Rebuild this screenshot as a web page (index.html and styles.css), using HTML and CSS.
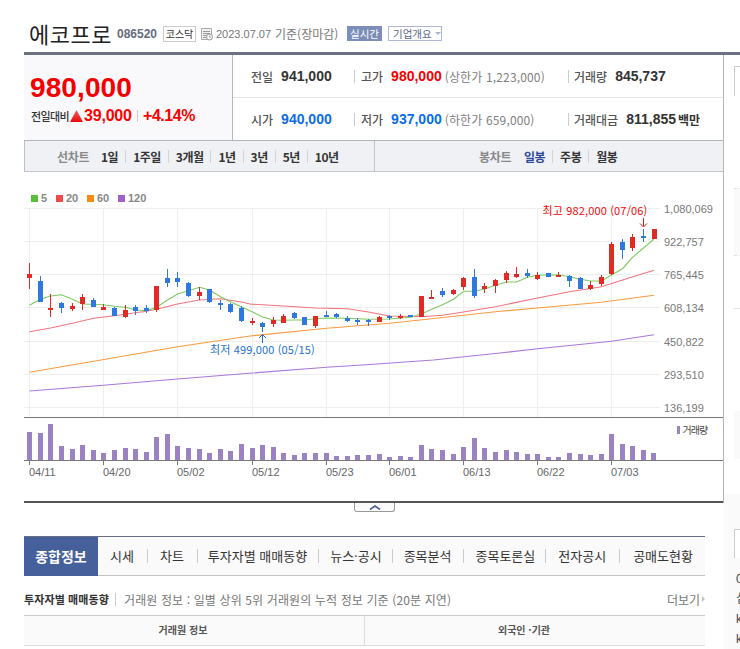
FILE: index.html
```html
<!DOCTYPE html>
<html lang="ko">
<head>
<meta charset="utf-8">
<title>에코프로</title>
<link rel="stylesheet" href="styles.css">
</head>
<body>
<div class="page">
  <header class="head">
    <h1 class="name">에코프로</h1>
    <span class="code">086520</span>
    <span class="market">코스닥</span>
    <svg class="cal" width="12" height="13" viewBox="0 0 12 13"><path class="cal-a" d="M.5.5h10v11H.5z"/><path class="cal-b" d="M2 3.5h7M2 5.5h7M2 7.5h4M2 9.5h3"/><circle class="cal-c" cx="8.5" cy="9" r="3"/><path class="cal-b" d="M8.5 7.5V9h1.5"/></svg>
    <span class="date">2023.07.07</span>
    <span class="basis">기준(장마감)</span>
    <span class="live">실시간</span>
    <span class="about">기업개요<i class="caret"></i></span>
  </header>
  <div class="body">
    <main class="main">
      <section class="summary">
        <div class="price-box">
          <div class="price">980,000</div>
          <div class="change">
            <span class="change-label">전일대비</span>
            <svg class="tri" width="13" height="12" viewBox="0 0 13 12"><defs><linearGradient id="tg" x1="0" y1="0" x2="0" y2="1"><stop offset="0" stop-color="#f46060"/><stop offset="1" stop-color="#e80808"/></linearGradient></defs><path fill="url(#tg)" d="M6.5 0L13 12H0z"/></svg>
            <span class="change-num">39,000</span>
            <span class="change-pct">+4.14%</span>
          </div>
        </div>
        <div class="quotes">
          <div class="row">
            <div class="cell"><span class="lb">전일</span><b class="val">941,000</b></div>
            <div class="cell sep"><span class="lb">고가</span><b class="val up">980,000</b><span class="lim">(상한가 1,223,000)</span></div>
            <div class="cell sep sep3"><span class="lb">거래량</span><b class="val">845,737</b></div>
          </div>
          <div class="row">
            <div class="cell"><span class="lb">시가</span><b class="val dn">940,000</b></div>
            <div class="cell sep"><span class="lb">저가</span><b class="val dn">937,000</b><span class="lim">(하한가 659,000)</span></div>
            <div class="cell sep sep3"><span class="lb">거래대금</span><b class="val">811,855</b><b class="unit">백만</b></div>
          </div>
        </div>
      </section>
      <nav class="periods">
        <div class="pgroup pleft">
          <span class="ptitle">선차트</span>
          <ul class="plist">
            <li>1일</li><li>1주일</li><li>3개월</li><li>1년</li><li>3년</li><li>5년</li><li>10년</li>
          </ul>
        </div>
        <div class="pgroup pright">
          <span class="ptitle">봉차트</span>
          <ul class="plist">
            <li class="on">일봉</li><li>주봉</li><li>월봉</li>
          </ul>
        </div>
      </nav>
      <svg class="chart" width="699" height="329" viewBox="24 172 699 329">
        <path class="grid" d="M24 208.5H660M24 241.5H660M24 274.5H660M24 307.5H660M24 341.5H660M24 374.5H660M24 407.5H660M29.5 208V417M103.5 208V417M177.5 208V417M252.5 208V417M326.5 208V417M389.5 208V417M463.5 208V417M537.5 208V417M611.5 208V417"/>
        <rect class="sw-g" x="31" y="195" width="7" height="7"/><text class="lg" x="41" y="202">5</text>
        <rect class="sw-r" x="56" y="195" width="7" height="7"/><text class="lg" x="66" y="202">20</text>
        <rect class="sw-o" x="87" y="195" width="7" height="7"/><text class="lg" x="97" y="202">60</text>
        <rect class="sw-p" x="118" y="195" width="7" height="7"/><text class="lg" x="128" y="202">120</text>

        <polyline class="ma ma-p" points="29.5,391 103.3,385.3 177.3,379 252.3,373 326.7,367.3 370,364.5 433.3,360 500,353 537.5,348.7 611.5,341.3 654,334.7"/>
        <polyline class="ma ma-o" points="29.5,372.3 101,360 177.5,346.7 250,336 326.7,328.3 389.5,323.3 420,320 500,311.3 537.5,308 601.5,302.3 654,295.3"/>
        <polyline class="ma ma-r" points="29.5,331.7 50.5,328 72.5,323.3 93.5,318.3 114.5,315.7 135.5,312.7 146.5,311.3 156.5,309.3 177.5,304 199.5,300 220.5,298.7 241.5,302 250,304 283.5,306 315.5,308 347.5,308.7 368.5,312 389.5,316 421.5,316.7 442.5,315.3 463.5,312 495.5,306.7 537.5,298 569.5,291.7 601.5,286.7 622.5,280 654,270.3"/>
        <polyline class="ma ma-g" points="29.5,305.3 40.5,299.3 50.5,296 61.5,294.7 72.5,299.3 82.5,304 103.5,304.7 114.5,306.3 125.5,307.3 135.5,310 146.5,310.7 156.5,307.3 167.5,300 177.5,294 188.5,290.7 199.5,287.3 209.5,290 220.5,296.7 230.5,301.7 241.5,307 250,310.7 262.5,317 273.5,320 283.5,320.3 294.5,320 304.5,320 315.5,318.7 326.5,318 347.5,318.3 368.5,319.3 389.5,319 410.5,317.3 421.5,314 431.5,309.3 442.5,304.7 453.5,299.3 463.5,291.3 474.5,291.3 484.5,289 495.5,285.3 506.5,282 516.5,282 527.5,277.3 537.5,275.3 548.5,275 558.5,274.7 569.5,276.7 580.5,279.3 590.5,281 601.5,281 611.5,275 622.5,268.7 632.5,257.3 643.5,248 654,239"/>

        <path class="c-up" d="M29 263h1V289h-1zM27 274h5V278h-5zM50 294h1V317h-1zM48 308h5V310h-5zM72 303h1V311h-1zM70 306h5V309h-5zM82 294h1V310h-1zM80 297h5V304h-5zM103 304h1V310h-1zM101 307h5V310h-5zM125 305h1V318h-1zM123 310h5V317h-5zM156 286h1V312h-1zM154 286h5V310h-5zM199 287h1V300h-1zM197 292h5V296h-5zM252 318h1V325h-1zM250 321h5V323h-5zM273 317h1V327h-1zM271 320h5V324h-5zM283 314h1V323h-1zM281 316h5V323h-5zM315 316h1V328h-1zM313 316h5V326h-5zM379 316h1V322h-1zM377 317h5V322h-5zM400 314h1V319h-1zM398 316h5V318h-5zM419 296h5V317h-5zM431 290h1V299h-1zM429 297h5V299h-5zM453 289h1V295h-1zM451 290h5V294h-5zM463 277h1V290h-1zM461 278h5V287h-5zM484 283h1V293h-1zM482 286h5V289h-5zM495 279h1V293h-1zM493 280h5V286h-5zM506 271h1V283h-1zM504 273h5V280h-5zM516 267h1V278h-1zM514 274h5V277h-5zM537 272h1V280h-1zM535 275h5V279h-5zM558 272h1V277h-1zM556 275h5V277h-5zM590 281h1V290h-1zM588 285h5V289h-5zM601 275h1V286h-1zM599 277h5V284h-5zM611 242h1V275h-1zM609 244h5V274h-5zM632 234h1V251h-1zM630 237h5V248h-5zM652 229h5V239h-5z"/>
        <path class="c-dn" d="M40 276h1V302h-1zM38 281h5V302h-5zM61 302h1V313h-1zM59 303h5V308h-5zM93 298h1V307h-1zM91 300h5V307h-5zM114 307h1V316h-1zM112 308h5V316h-5zM135 305h1V315h-1zM133 307h5V311h-5zM146 305h1V313h-1zM144 308h5V311h-5zM167 269h1V287h-1zM165 278h5V283h-5zM177 272h1V287h-1zM175 278h5V282h-5zM188 282h1V297h-1zM186 283h5V296h-5zM209 289h1V303h-1zM207 289h5V302h-5zM220 300h1V310h-1zM218 303h5V305h-5zM230 303h1V313h-1zM228 304h5V312h-5zM241 306h1V322h-1zM239 308h5V321h-5zM262 322h1V332h-1zM260 323h5V327h-5zM294 312h1V319h-1zM292 313h5V318h-5zM302 317h5V325h-5zM326 311h1V317h-1zM324 315h5V317h-5zM336 313h1V318h-1zM334 314h5V317h-5zM347 316h1V322h-1zM345 318h5V321h-5zM357 318h1V325h-1zM355 320h5V322h-5zM368 319h1V326h-1zM366 320h5V322h-5zM389 315h1V320h-1zM387 316h5V318h-5zM408 315h5V317h-5zM442 288h1V297h-1zM440 291h5V295h-5zM474 269h1V298h-1zM472 277h5V296h-5zM527 269h1V278h-1zM525 273h5V276h-5zM546 273h5V277h-5zM569 275h1V287h-1zM567 276h5V281h-5zM580 277h1V289h-1zM578 278h5V289h-5zM622 239h1V259h-1zM620 242h5V250h-5zM643 229h1V242h-1zM641 236h5V238h-5z"/>

        <text class="note note-up" x="542.5" y="215">최고 982,000 (07/06)</text>
        <path class="arr-up" d="M643.5 218V226.5M640 223.5l3.5 3.5 3.5-3.5"/>
        <text class="note note-dn" x="210" y="354">최저 499,000 (05/15)</text>
        <path class="arr-dn" d="M262.5 343V335M259 338l3.5-3.5 3.5 3.5"/>

        <g class="axis">
          <text x="664" y="213">1,080,069</text><text x="664" y="246">922,757</text><text x="664" y="279">765,445</text><text x="664" y="312">608,134</text><text x="664" y="346">450,822</text><text x="664" y="379">293,510</text><text x="664" y="412">136,199</text>
        </g>
        <path class="rule" d="M24 417.5H723M24 460.5H723M29.5 461V465M103.5 461V465M177.5 461V465M252.5 461V465M326.5 461V465M389.5 461V465M463.5 461V465M537.5 461V465M611.5 461V465"/>
        <path class="vol" d="M27 432h5V460h-5zM38 433h5V460h-5zM48 424h5V460h-5zM59 446h5V460h-5zM70 449h5V460h-5zM80 445h5V460h-5zM91 450h5V460h-5zM101 453h5V460h-5zM112 450h5V460h-5zM123 448h5V460h-5zM133 449h5V460h-5zM144 452h5V460h-5zM154 437h5V460h-5zM165 434h5V460h-5zM175 446h5V460h-5zM186 448h5V460h-5zM197 449h5V460h-5zM207 453h5V460h-5zM218 449h5V460h-5zM228 451h5V460h-5zM239 444h5V460h-5zM250 448h5V460h-5zM260 445h5V460h-5zM271 447h5V460h-5zM281 453h5V460h-5zM292 455h5V460h-5zM302 453h5V460h-5zM313 453h5V460h-5zM324 453h5V460h-5zM334 456h5V460h-5zM345 456h5V460h-5zM355 455h5V460h-5zM366 455h5V460h-5zM377 454h5V460h-5zM387 457h5V460h-5zM398 456h5V460h-5zM408 457h5V460h-5zM419 445h5V460h-5zM429 449h5V460h-5zM440 450h5V460h-5zM451 454h5V460h-5zM461 447h5V460h-5zM472 438h5V460h-5zM482 448h5V460h-5zM493 452h5V460h-5zM504 450h5V460h-5zM514 452h5V460h-5zM525 454h5V460h-5zM535 454h5V460h-5zM546 457h5V460h-5zM556 457h5V460h-5zM567 453h5V460h-5zM578 454h5V460h-5zM588 455h5V460h-5zM599 454h5V460h-5zM609 434h5V460h-5zM620 444h5V460h-5zM630 446h5V460h-5zM641 450h5V460h-5zM651 453h5V460h-5zM677 426h3V434h-3z"/>
        <text class="vol-lb" x="682.5" y="434">거래량</text>
        <g class="dates">
          <text x="29" y="476">04/11</text><text x="103" y="476">04/20</text><text x="177" y="476">05/02</text><text x="252" y="476">05/12</text><text x="326" y="476">05/23</text><text x="389" y="476">06/01</text><text x="463" y="476">06/13</text><text x="537" y="476">06/22</text><text x="611" y="476">07/03</text>
        </g>
      </svg>
      <div class="fold"><svg width="12" height="5" viewBox="0 0 12 5"><path class="fold-ic" d="M1 4.5l5-3.5 5 3.5"/></svg></div>
    </main>
    <aside class="side">
      <div class="s-box s-a"></div>
      <div class="s-dash s-b"></div>
      <div class="s-rule"></div>
      <div class="s-fill"></div>
      <div class="s-low">
        <div class="s-box s-c"></div>
        <p class="s-t">0</p><p class="s-t">심</p><p class="s-t">k</p><p class="s-t">k</p>
      </div>
    </aside>
    <section class="lower">
      <nav class="tabs">
        <a class="tab active">종합정보</a>
        <a class="tab t1">시세</a><a class="tab t2">차트</a><a class="tab t3">투자자별 매매동향</a><a class="tab t4">뉴스·공시</a><a class="tab t5">종목분석</a><a class="tab t6">종목토론실</a><a class="tab t7">전자공시</a><a class="tab t8">공매도현황</a>
      </nav>
      <div class="sub">
        <strong class="sub-t">투자자별 매매동향</strong>
        <span class="sub-d">거래원 정보 : 일별 상위 5위 거래원의 누적 정보 기준 (20분 지연)</span>
        <span class="more">더보기<i class="more-ic"></i></span>
      </div>
      <div class="thead"><div class="th">거래원 정보</div><div class="th th2">외국인 ·기관</div></div>
    </section>
  </div>
</div>
</body>
</html>
```
FILE: styles.css
```css
* { box-sizing: border-box; }
html, body { margin: 0; padding: 0; background: #fff; }
body { font-family: "Noto Sans CJK KR", "Liberation Sans", sans-serif; color: #333; }
ul { list-style: none; margin: 0; padding: 0; }
p { margin: 0; }

.page { width: 740px; height: 649px; padding-left: 24px; overflow: hidden; position: relative; }

/* header */
.head { height: 55px; border-bottom: 3px solid #6c7180; display: flex; align-items: center; padding: 13px 0 0 5px; }
.name { margin: 0; font-size: 22px; font-weight: 400; letter-spacing: .5px; line-height: 24px; color: #222; width: 88px; white-space: nowrap; }
.code { font: bold 12px "Liberation Sans", sans-serif; color: #666c7c; width: 46px; padding-top: 3px; }
.market { width: 33px; height: 16px; margin-top: 2px; border: 1px solid #ccc; font-size: 10px; line-height: 13px; text-align: center; color: #333; }
.cal { margin: 4px 0 0 5px; }
.cal-a { fill: #f2f2f2; stroke: #aaa; }
.cal-b { fill: none; stroke: #999; }
.cal-c { fill: #fff; stroke: #999; }
.date { font: 11px "Liberation Sans", sans-serif; color: #777; margin: 3px 0 0 3px; width: 59px; }
.basis { font-size: 12px; line-height: 16px; color: #777; width: 72px; padding-top: 2px; }
.live { width: 35px; height: 15px; margin-top: 2px; background: #7b8db9; color: #fff; font-size: 10.5px; line-height: 15px; text-align: center; }
.about { width: 54px; height: 15px; margin: 2px 0 0 6px; border: 1px solid #aeb8d4; color: #5a6684; font-size: 10.5px; line-height: 12px; padding-left: 4px; display: flex; align-items: center; }
.caret { width: 0; height: 0; margin-left: 3px; border: 3px solid transparent; border-top: 3px solid #aab4d0; border-bottom: 0; }

/* body */
.body { display: grid; grid-template-columns: 700px 16px; grid-template-rows: 448px auto; }
.main { width: 700px; height: 448px; border-right: 1px solid #b5b5b5; }

/* summary */
.summary { height: 86px; display: flex; border-bottom: 1px solid #b4b4bc; }
.price-box { width: 209px; background: #f9f9fb; border-right: 1px solid #b8b8b8; padding: 15px 0 0 6px; }
.price { font: bold 28px/36px "Liberation Sans", sans-serif; color: #f40000; letter-spacing: .1px; }
.change { display: flex; align-items: center; height: 20px; }
.change-label { font-size: 11px; font-weight: 500; letter-spacing: -.6px; width: 40px; color: #333; padding-left: 1px; }
.tri { flex: none; }
.change-num { font: bold 16px "Liberation Sans", sans-serif; color: #f00; margin-left: 1px; letter-spacing: -.2px; width: 53px; }
.change-pct { font: bold 16px "Liberation Sans", sans-serif; color: #f00; border-left: 1px solid #ccc; padding-left: 5px; line-height: 12px; letter-spacing: -.45px; }
.quotes { flex: 1; display: flex; flex-direction: column; }
.row { flex: 1; display: grid; grid-template-columns: 121px 214px 1fr; align-items: center; }
.row + .row { border-top: 1px solid #e4e4e4; }
.cell { display: flex; align-items: center; height: 13px; padding-left: 18px; white-space: nowrap; }
.cell.sep { border-left: 1px solid #ccc; padding-left: 6px; }
.cell.sep3 { padding-left: 5px; }
.lb { font-size: 12px; font-weight: 500; color: #555; margin-right: 8px; }
.val { font: bold 14px "Liberation Sans", sans-serif; color: #333; }
.val.up { color: #f40000; }
.val.dn { color: #0a6ce6; }
.lim { font-size: 12px; color: #808080; margin-left: 3px; letter-spacing: .15px; }
.unit { font-size: 12px; font-weight: 700; margin-left: 2px; color: #333; }

/* period bar */
.periods { height: 31px; display: flex; background: #eff1f5; border-left: 1px solid #c0c0c8; border-bottom: 1px solid #c4c4cc; }
.pgroup { display: flex; align-items: center; height: 30px; }
.pleft { width: 350px; padding-left: 32px; border-right: 1px solid #c4c4cc; }
.pright { flex: 1; padding-left: 104px; }
.ptitle { font-size: 12px; font-weight: 700; color: #888; width: 44px; letter-spacing: -.3px; }
.pright .ptitle { width: 45px; }
.plist { display: flex; }
.plist li { font-size: 12px; font-weight: 700; color: #333; line-height: 13px; padding: 0 7px; border-left: 1px solid #d2d4da; letter-spacing: -.5px; }
.plist li:first-child { border-left: 0; padding-left: 0; }
.plist li.on { color: #2d4a9a; }

/* chart */
.chart { display: block; box-sizing: content-box; border-bottom: 2px solid #555; }
.grid { fill: none; stroke: #eeeeee; stroke-width: 1; }
.rule { fill: none; stroke: #777; stroke-width: 1; }
.ma { fill: none; stroke-width: 1.1; }
.ma-g { stroke: #7dcb62; }
.ma-r { stroke: #f0757d; }
.ma-o { stroke: #f99b40; }
.ma-p { stroke: #aa78da; }
.c-up { fill: #e02a26; }
.c-dn { fill: #2f78e0; }
.vol { fill: #9b82c3; }
.sw-g { fill: #5bbf3e; }
.sw-r { fill: #ee4b4b; }
.sw-o { fill: #f98a14; }
.sw-p { fill: #a061c9; }
.lg { font: bold 11px "Liberation Sans", sans-serif; fill: #888; }
.note { font-size: 11px; letter-spacing: .15px; }
.note-up { fill: #f00a0a; }
.note-dn { fill: #1e6fd0; }
.arr-up { fill: none; stroke: #e02020; }
.arr-dn { fill: none; stroke: #1e6fd0; }
.axis text { font: 11px "Liberation Sans", sans-serif; fill: #777; }
.dates text { font: 11px "Liberation Sans", sans-serif; fill: #666; }
.vol-lb { font-size: 10px; fill: #444; letter-spacing: -1px; }

/* fold button */
.fold { width: 41px; height: 9px; margin-left: 330px; border: 1px solid #999; border-top: 0; border-radius: 0 0 3px 3px; background: #fafafa; display: flex; align-items: flex-start; justify-content: center; padding-top: 2px; }
.fold svg { display: block; }
.fold-ic { fill: none; stroke: #4a5f90; stroke-width: 1.6; }

/* side */
.side { grid-column: 2; grid-row: 1 / span 2; height: 594px; padding-left: 10px; display: flex; flex-direction: column; overflow: hidden; }
.s-box { width: 30px; border-top: 1px solid #ccc; border-left: 1px solid #ccc; }
.s-a { height: 32px; margin-top: 11px; }
.s-dash { width: 30px; }
.s-b { height: 71px; margin-top: 92px; background: #fafafa; border-top: 1px dashed #e4e4e4; border-bottom: 1px dashed #e4e4e4; }
.s-rule { height: 0; margin-top: 52px; border-top: 1px dashed #e4e4e4; }
.s-fill { height: 51px; margin-top: 102px; background: #fafafa; }
.s-low { margin: 35px -10px 0; padding: 35px 0 0 10px; background: #fafafa; flex: 1; }
.s-c { height: 29px; background: #fff; margin-bottom: 11px; }
.s-t { font: 12px/20px "Liberation Sans", "Noto Sans CJK KR", sans-serif; color: #444; margin-left: 2px; }

/* lower */
.lower { grid-column: 1; grid-row: 2; width: 681px; padding-top: 33px; }
.tabs { height: 40px; display: flex; align-items: center; background: #fafafa; border-top: 1px solid #666e80; border-bottom: 1px solid #c2c2c2; }
.tab { font-size: 13px; line-height: 14px; color: #333; white-space: nowrap; border-left: 1px solid #ccc; }
.tab.active { width: 74px; height: 39px; border: 0; background: #46609b; color: #fff; font-size: 14px; font-weight: 700; line-height: 38px; text-align: center; }
.t1 { border-left: 0; padding: 0 13px 0 12px; }
.t2 { padding: 0 13px 0 12px; }
.t3 { padding: 0 11px 0 10px; }
.t4 { padding: 0 10px 0 11px; }
.t5 { padding: 0 12px 0 11px; }
.t6 { padding: 0 10px 0 11px; }
.t7 { padding: 0 13px 0 12px; }
.t8 { padding: 0 0 0 13px; }

.sub { height: 39px; display: flex; align-items: center; padding-top: 7px; }
.sub-t { font-size: 11px; font-weight: 700; color: #333; letter-spacing: .1px; width: 92px; border-right: 1px solid #ccc; line-height: 13px; white-space: nowrap; }
.sub-d { font-size: 12px; color: #777; margin-left: 8px; letter-spacing: .12px; white-space: nowrap; }
.more { margin-left: auto; font-size: 12px; color: #777; display: flex; align-items: center; white-space: nowrap; }
.more-ic { width: 0; height: 0; margin-left: 2px; border: 3px solid transparent; border-left: 3px solid #c4c4c4; border-right: 0; }

.thead { height: 31px; display: grid; grid-template-columns: 340px 1fr; background: #fafafa; border-top: 1px solid #ccc; border-bottom: 1px solid #ddd; }
.th { font-size: 10px; font-weight: 700; color: #555; text-align: center; line-height: 28px; padding-right: 22px; }
.th2 { border-left: 1px solid #ddd; }
```
